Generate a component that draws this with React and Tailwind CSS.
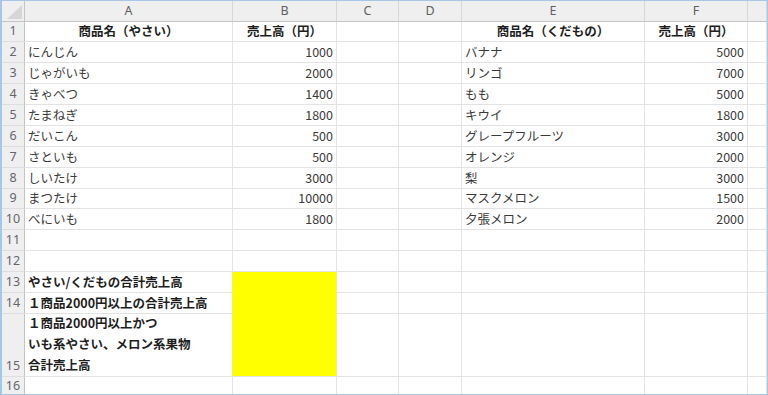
import React from "react";

const veg = [
  ["にんじん", "1000"],
  ["じゃがいも", "2000"],
  ["きゃべつ", "1400"],
  ["たまねぎ", "1800"],
  ["だいこん", "500"],
  ["さといも", "500"],
  ["しいたけ", "3000"],
  ["まつたけ", "10000"],
  ["べにいも", "1800"],
];
const fruit = [
  ["バナナ", "5000"],
  ["リンゴ", "7000"],
  ["もも", "5000"],
  ["キウイ", "1800"],
  ["グレープフルーツ", "3000"],
  ["オレンジ", "2000"],
  ["梨", "3000"],
  ["マスクメロン", "1500"],
  ["夕張メロン", "2000"],
];

function RowHead({ n }) {
  return (
    <div className="flex items-end justify-center bg-[#efefef] border-r border-b border-r-[#c4c4c4] border-b-[#dedede] text-[12.5px] leading-[21px] text-[#666] font-['Noto_Sans','Liberation_Sans',sans-serif]">
      {n}
    </div>
  );
}

function Cell({ children, align = "left", bold = false, rightYellow = false }) {
  const j =
    align === "right"
      ? "justify-end pr-[3px]"
      : align === "center"
      ? "justify-center"
      : "justify-start pl-[3px]";
  return (
    <div
      className={
        "flex items-end whitespace-nowrap border-r border-b border-[#e3e3e3] text-[12.5px] leading-[20px] " +
        j +
        (bold ? " font-bold text-[#1e1e1e]" : " text-[#3a3a3a]") +
        (rightYellow ? " border-r-[#ffff00]" : "")
      }
    >
      {children}
    </div>
  );
}

function Blank({ n }) {
  return Array.from({ length: n }, (_, i) => <Cell key={i} />);
}

export default function App() {
  const cols = ["A", "B", "C", "D", "E", "F", ""];
  const rows = [];
  for (let r = 1; r <= 12; r++) {
    const v = veg[r - 2];
    const f = fruit[r - 2];
    rows.push(
      <React.Fragment key={r}>
        <RowHead n={r} />
        {r === 1 ? (
          <>
            <Cell align="center" bold>商品名（やさい）</Cell>
            <Cell align="center" bold>売上高（円）</Cell>
            <Blank n={2} />
            <Cell align="center" bold>商品名（くだもの）</Cell>
            <Cell align="center" bold>売上高（円）</Cell>
            <Cell />
          </>
        ) : (
          <>
            <Cell>{v ? v[0] : ""}</Cell>
            <Cell align="right">{v ? v[1] : ""}</Cell>
            <Blank n={2} />
            <Cell>{f ? f[0] : ""}</Cell>
            <Cell align="right">{f ? f[1] : ""}</Cell>
            <Cell />
          </>
        )}
      </React.Fragment>
    );
  }

  return (
    <div className="w-[768px] h-[395px] overflow-hidden bg-white border border-l-2 border-[#a7c7e7] font-['Noto_Sans_CJK_JP','Noto_Sans',sans-serif]">
      <div className="grid h-full grid-cols-[23px_208px_104px_62px_63px_183px_103px_1fr] grid-rows-[21px_20px_21px_21px_21px_21px_21px_21px_21px_20px_21px_21px_21px_21px_21px_63px_1fr]">
        {/* header row */}
        <div className="relative bg-[#efefef] border-r border-b border-r-[#c4c4c4] border-b-[#c4c4c4]">
          <svg className="absolute right-[2px] bottom-[2px]" width="15" height="14" viewBox="0 0 15 14">
            <polygon points="15,0 15,14 0,14" fill="#d6d6d6" />
          </svg>
        </div>
        {cols.map((c, i) => (
          <div
            key={i}
            className="flex items-center justify-center bg-[#efefef] border-r border-b border-r-[#d8d8d8] border-b-[#c4c4c4] text-[12.5px] text-[#606060] font-['Noto_Sans','Liberation_Sans',sans-serif]"
          >
            {c}
          </div>
        ))}
        {rows}

        {/* yellow fill B13:B15 */}
        <div className="col-[3] row-[14/span_3] bg-[#ffff00] border-r border-b border-[#e3e3e3]" />

        {/* row 13 */}
        <RowHead n={13} />
        <Cell bold rightYellow>やさい/くだもの合計売上高</Cell>
        <Blank n={5} />

        {/* row 14 */}
        <RowHead n={14} />
        <Cell bold rightYellow>１商品2000円以上の合計売上高</Cell>
        <Blank n={5} />

        {/* row 15 */}
        <RowHead n={15} />
        <div className="flex flex-col justify-end pl-[3px] pb-[1px] border-r border-b border-r-[#ffff00] border-b-[#e3e3e3] text-[12.5px] leading-[21px] font-bold text-[#1e1e1e] whitespace-nowrap">
          <span>１商品2000円以上かつ</span>
          <span>いも系やさい、メロン系果物</span>
          <span>合計売上高</span>
        </div>
        <Blank n={5} />

        {/* row 16 */}
        <div className="flex items-start justify-center bg-[#efefef] border-r border-r-[#c4c4c4] text-[12.5px] leading-[18px] text-[#666] font-['Noto_Sans','Liberation_Sans',sans-serif]">
          16
        </div>
        <Blank n={7} />
      </div>
    </div>
  );
}
